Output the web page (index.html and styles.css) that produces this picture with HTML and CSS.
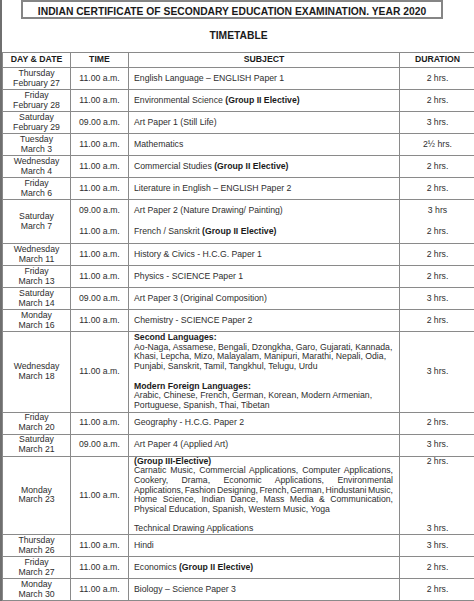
FILE: index.html
```html
<!DOCTYPE html>
<html lang="en">
<head>
<meta charset="utf-8">
<title>ICSE Timetable 2020</title>
<link rel="stylesheet" href="styles.css">
</head>
<body>
<div class="page">
  <div class="title-box"><h1 class="title">INDIAN CERTIFICATE OF SECONDARY EDUCATION EXAMINATION. YEAR 2020</h1></div>
  <h2 class="subtitle">TIMETABLE</h2>
  <table class="tt">
    <colgroup><col class="c-date"><col class="c-time"><col class="c-subj"><col class="c-dur"></colgroup>
    <thead>
      <tr class="head"><th>DAY &amp; DATE</th><th>TIME</th><th>SUBJECT</th><th>DURATION</th></tr>
    </thead>
    <tbody>
      <tr><td class="date">Thursday<br>February 27</td><td class="time">11.00 a.m.</td><td class="subj">English Language – ENGLISH Paper 1</td><td class="dur">2 hrs.</td></tr>
      <tr><td class="date">Friday<br>February 28</td><td class="time">11.00 a.m.</td><td class="subj">Environmental Science <b>(Group II Elective)</b></td><td class="dur">2 hrs.</td></tr>
      <tr><td class="date">Saturday<br>February 29</td><td class="time">09.00 a.m.</td><td class="subj">Art Paper 1 (Still Life)</td><td class="dur">3 hrs.</td></tr>
      <tr><td class="date">Tuesday<br>March 3</td><td class="time">11.00 a.m.</td><td class="subj">Mathematics</td><td class="dur">2½ hrs.</td></tr>
      <tr><td class="date">Wednesday<br>March 4</td><td class="time">11.00 a.m.</td><td class="subj">Commercial Studies <b>(Group II Elective)</b></td><td class="dur">2 hrs.</td></tr>
      <tr><td class="date">Friday<br>March 6</td><td class="time">11.00 a.m.</td><td class="subj">Literature in English – ENGLISH Paper 2</td><td class="dur">2 hrs.</td></tr>
      <tr><td class="date" rowspan="2">Saturday<br>March 7</td><td class="time nb">09.00 a.m.</td><td class="subj nb">Art Paper 2 (Nature Drawing/ Painting)</td><td class="dur nb">3 hrs</td></tr>
      <tr><td class="time nt">11.00 a.m.</td><td class="subj nt">French / Sanskrit <b>(Group II Elective)</b></td><td class="dur nt">2 hrs.</td></tr>
      <tr><td class="date">Wednesday<br>March 11</td><td class="time">11.00 a.m.</td><td class="subj">History &amp; Civics - H.C.G. Paper 1</td><td class="dur">2 hrs.</td></tr>
      <tr><td class="date">Friday<br>March 13</td><td class="time">11.00 a.m.</td><td class="subj">Physics - SCIENCE Paper 1</td><td class="dur">2 hrs.</td></tr>
      <tr><td class="date">Saturday<br>March 14</td><td class="time">09.00 a.m.</td><td class="subj">Art Paper 3 (Original Composition)</td><td class="dur">3 hrs.</td></tr>
      <tr><td class="date">Monday<br>March 16</td><td class="time">11.00 a.m.</td><td class="subj">Chemistry - SCIENCE Paper 2</td><td class="dur">2 hrs.</td></tr>
      <tr class="lang"><td class="date">Wednesday<br>March 18</td><td class="time">11.00 a.m.</td>
        <td class="subj block">
          <div class="line"><b>Second Languages:</b></div>
          <div class="line">Ao-Naga, Assamese, Bengali, Dzongkha, Garo, Gujarati, Kannada,</div>
          <div class="line">Khasi, Lepcha, Mizo, Malayalam, Manipuri, Marathi, Nepali, Odia,</div>
          <div class="line">Punjabi, Sanskrit, Tamil, Tangkhul, Telugu, Urdu</div>
          <div class="line gap"><b>Modern Foreign Languages:</b></div>
          <div class="line">Arabic, Chinese, French, German, Korean, Modern Armenian,</div>
          <div class="line">Portuguese, Spanish, Thai, Tibetan</div>
        </td>
        <td class="dur">3 hrs.</td></tr>
      <tr><td class="date">Friday<br>March 20</td><td class="time">11.00 a.m.</td><td class="subj">Geography - H.C.G. Paper 2</td><td class="dur">2 hrs.</td></tr>
      <tr><td class="date">Saturday<br>March 21</td><td class="time">09.00 a.m.</td><td class="subj">Art Paper 4 (Applied Art)</td><td class="dur">3 hrs.</td></tr>
      <tr class="grp"><td class="date" rowspan="2">Monday<br>March 23</td><td class="time" rowspan="2">11.00 a.m.</td>
        <td class="subj block tight nb top">
          <div class="line"><b>(Group III-Elective)</b></div>
          <div class="line just">Carnatic Music, Commercial Applications, Computer Applications,</div>
          <div class="line just">Cookery, Drama, Economic Applications, Environmental</div>
          <div class="line just">Applications, Fashion Designing, French, German, Hindustani Music,</div>
          <div class="line just">Home Science, Indian Dance, Mass Media &amp; Communication,</div>
          <div class="line">Physical Education, Spanish, Western Music, Yoga</div>
        </td>
        <td class="dur tight nb top">2 hrs.</td></tr>
      <tr class="grp2"><td class="subj nt bottom">Technical Drawing Applications</td><td class="dur nt bottom">3 hrs.</td></tr>
      <tr><td class="date">Thursday<br>March 26</td><td class="time">11.00 a.m.</td><td class="subj">Hindi</td><td class="dur">3 hrs.</td></tr>
      <tr><td class="date">Friday<br>March 27</td><td class="time">11.00 a.m.</td><td class="subj">Economics <b>(Group II Elective)</b></td><td class="dur">2 hrs.</td></tr>
      <tr><td class="date">Monday<br>March 30</td><td class="time">11.00 a.m.</td><td class="subj">Biology – Science Paper 3</td><td class="dur">2 hrs.</td></tr>
    </tbody>
  </table>
</div>
</body>
</html>
```
FILE: styles.css
```css
html, body {
  margin: 0;
  padding: 0;
  background: #ffffff;
  overflow: hidden;
}

body {
  font-family: "Liberation Sans", Arial, sans-serif;
  color: #2e2e2e;
}

.page {
  min-height: 601px;
  border-left: 2px solid #6f6f6f;
  box-sizing: border-box;
}

.title-box {
  margin-left: 19px;
  width: 418px;
  border: 2px solid #858585;
  padding-top: 4px;
}

.title {
  margin: 0;
  font-size: 10.3px;
  line-height: 11px;
  font-weight: bold;
  text-align: center;
  color: #1a1a1a;
  white-space: nowrap;
}

.subtitle {
  margin: 11px 0 0;
  font-size: 10.3px;
  line-height: 12px;
  font-weight: bold;
  text-align: center;
  color: #1a1a1a;
  padding-left: 1px;
}

.tt {
  margin-top: 10px;
  border-collapse: collapse;
  table-layout: fixed;
  width: 473px;
  font-size: 8.7px;
  line-height: 9.7px;
}

.c-date { width: 68px; }
.c-time { width: 58px; }
.c-subj { width: 271px; }
.c-dur { width: 76px; }

.tt th,
.tt td {
  border: 1px solid #8a8a8a;
  padding: 0 2px;
  vertical-align: middle;
  white-space: nowrap;
}

.tt th {
  font-weight: bold;
  color: #1a1a1a;
  text-align: center;
}

.tt tr.head { height: 15px; }
.tt tbody tr { height: 22px; }
.tt tbody tr.lang { height: 80px; }
.tt tbody tr.grp { height: 58px; }
.tt tbody tr.grp2 { height: 20px; }

.tt b { color: #1a1a1a; }

.date, .time, .dur { text-align: center; }

.subj {
  text-align: left;
  padding-left: 5px !important;
  padding-right: 6px !important;
}

.subj.block { padding-top: 1px; padding-bottom: 1px; }
.tt td.tight { padding-top: 0; padding-bottom: 0; }

.line { white-space: nowrap; }
.line.gap { margin-top: 9.7px; }
.line.just {
  white-space: normal;
  word-spacing: -1.5px;
  text-align: justify;
  text-align-last: justify;
}

.top { vertical-align: top !important; }
.bottom { vertical-align: bottom !important; padding-bottom: 1px !important; }

.nb { border-bottom: hidden !important; }
.nt { border-top: hidden !important; }
```
